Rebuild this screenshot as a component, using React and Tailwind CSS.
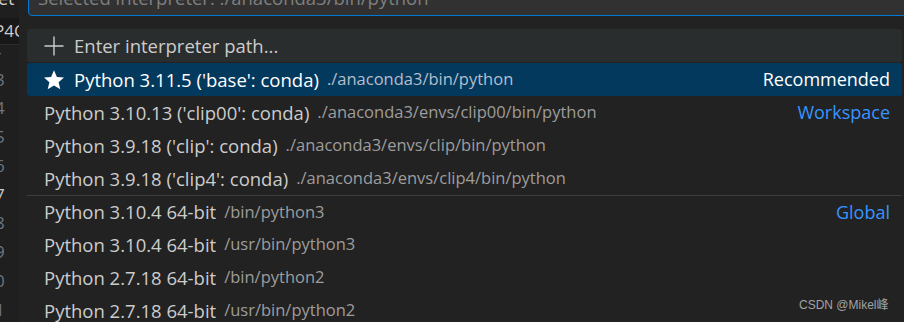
const font = { fontFamily: '"Open Sans", "Noto Sans", sans-serif' };

const groups = [
  [
    { label: "Python 3.10.13 ('clip00': conda)", path: './anaconda3/envs/clip00/bin/python', tag: 'Workspace' },
    { label: "Python 3.9.18 ('clip': conda)", path: './anaconda3/envs/clip/bin/python' },
    { label: "Python 3.9.18 ('clip4': conda)", path: './anaconda3/envs/clip4/bin/python' },
  ],
  [
    { label: 'Python 3.10.4 64-bit', path: '/bin/python3', tag: 'Global' },
    { label: 'Python 3.10.4 64-bit', path: '/usr/bin/python3' },
    { label: 'Python 2.7.18 64-bit', path: '/bin/python2' },
    { label: 'Python 2.7.18 64-bit', path: '/usr/bin/python2' },
  ],
];

const lineNums = ['3', '4', '5', '6', '7', '8', '9', '0', '1'];

function PlusIcon() {
  return (
    <svg width="20" height="20" viewBox="0 0 20 20" fill="none">
      <path d="M10 0.5v19M0.5 10h19" stroke="#cccccc" strokeWidth="1.4" />
    </svg>
  );
}

function StarIcon() {
  return (
    <svg width="20" height="20" viewBox="0 0 20 20">
      <path d="M10 0.3l2.9 6.6 7.1.6-5.4 4.7 1.7 7L10 15.5l-6.3 3.7 1.7-7L0 7.5l7.1-.6z" fill="#ffffff" />
    </svg>
  );
}

function Row({ item, first }) {
  return (
    <div
      className={`flex items-center h-[33px] pl-[17px] pr-3 ${first ? 'border-t border-[#3d3d3d]' : ''}`}
    >
      <span className="text-[18.5px] text-[#cccccc] whitespace-nowrap">{item.label}</span>
      <span className="ml-2 text-[16.5px] text-[#9d9d9d] whitespace-nowrap">{item.path}</span>
      {item.tag && <span className="ml-auto text-[18px] text-[#3794ff]">{item.tag}</span>}
    </div>
  );
}

export default function App() {
  return (
    <div className="relative flex w-[904px] h-[322px] overflow-hidden bg-[#222222]" style={font}>
      {/* editor strip behind the picker */}
      <div className="w-[19px] shrink-0 overflow-hidden bg-[#1f1f1f] flex flex-col">
        <div className="h-[22px] text-[18px] leading-none text-[#cccccc] -mt-[11px] -ml-[2px]">et</div>
        <div className="h-[35px] mt-[11px] bg-[#181818] border-b border-[#2b2b2b] flex items-center text-[17px] text-[#cccccc] whitespace-nowrap -ml-[6px]">
          P4C
        </div>
        <div className="text-[17px] leading-none text-[#6e7681] -ml-[4px] mt-[-2px]">-</div>
        <div className="flex flex-col text-[17px] leading-[28.75px] text-[#6e7681] -ml-[5px] mt-[6px]">
          {lineNums.map((n, i) => (
            <span key={i} className={n === '7' ? 'text-[#cccccc]' : ''}>{n}</span>
          ))}
        </div>
      </div>

      {/* quick pick */}
      <div className="flex-1 min-w-0 pl-2 pr-[2px]">
        <div className="-mt-[17px] ml-px -mr-[6px] h-[33px] border border-[#0078d4] bg-[#313131] rounded-sm flex items-center pl-[9px] pb-1">
          <span className="text-[18.5px] text-[#7f7f7f] whitespace-nowrap">Selected interpreter: ./anaconda3/bin/python</span>
        </div>

        <div className="mt-[13px] flex items-center gap-2.5 h-[33px] pl-[17px] rounded-[3px] bg-[#2a2d2e]">
          <PlusIcon />
          <span className="text-[18.5px] text-[#cccccc]">Enter interpreter path...</span>
        </div>

        <div className="mt-px flex items-center h-[33px] pl-[17px] pr-3 rounded-[3px] bg-[#04395e]">
          <StarIcon />
          <span className="ml-2.5 text-[18.5px] text-white whitespace-nowrap">Python 3.11.5 ('base': conda)</span>
          <span className="ml-2 text-[16.5px] text-[#b3bfcc] whitespace-nowrap">./anaconda3/bin/python</span>
          <span className="ml-auto text-[18px] text-white">Recommended</span>
        </div>

        {groups.map((g, gi) =>
          g.map((item, i) => <Row key={`${gi}-${i}`} item={item} first={gi > 0 && i === 0} />)
        )}
      </div>

      <div
        className="absolute left-[799px] top-[299px] text-[12px] leading-none text-[#a3a3a3]"
        style={{ fontFamily: '"Liberation Sans", "Noto Sans CJK SC", sans-serif' }}
      >
        CSDN @Mikel峰
      </div>
    </div>
  );
}
